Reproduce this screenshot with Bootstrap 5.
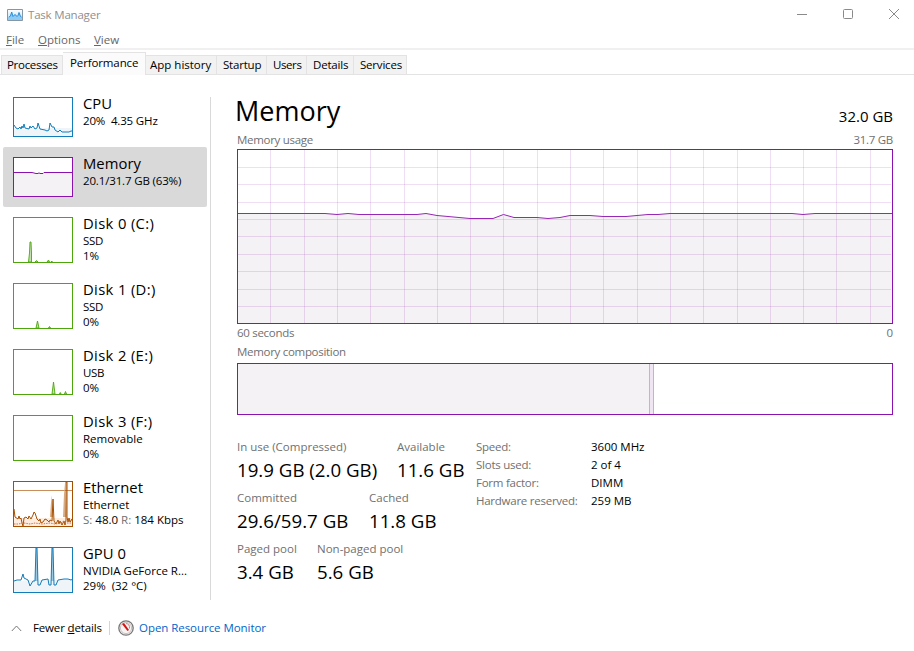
<!DOCTYPE html>
<html lang="en">
<head>
<meta charset="utf-8">
<title>Task Manager</title>
<link href="https://cdn.jsdelivr.net/npm/bootstrap@5.3.0/dist/css/bootstrap.min.css" rel="stylesheet">
<style>
body{font-family:"Open Sans","Noto Sans",sans-serif;font-size:11.5px;line-height:16px;color:#000;background:#fff;width:914px;height:651px;overflow:hidden}
svg{display:block;flex:none}
.titlebar{height:30px;color:#8f8f8f;padding-left:7px}
.titlebar .caption{letter-spacing:-.2px;padding-left:5px}
.winbtns{margin-right:-3px;margin-top:-2px}
.winbtn{width:46px;height:28px;color:#8a8a8a}
.menubar{height:20px;color:#666;padding:2px 0 0 6px;border-bottom:2px solid #f0f0f0}
.menubar .m1{width:32px}.menubar .m2{width:56px}
.tabstrip{height:25px;padding:2px 0 0 1px;box-shadow:inset 0 -1px #e3e3e3}
.tabstrip .tb{height:20px;background:#f2f2f2;border:1px solid #e3e3e3;border-left:0;white-space:nowrap;line-height:18px;padding-left:6px}
.tabstrip .tb.sel{height:23px;background:#fbfbfb;border-bottom:0;line-height:20px;padding-left:7px;letter-spacing:-.12px}
.w62{width:62px;border-left:1px solid #e3e3e3!important;padding-left:5px!important;letter-spacing:-.3px}.w83{width:83px}.w71{width:71px;padding-left:4px!important}.w50{width:50px;letter-spacing:-.2px}.w40{width:40px;letter-spacing:-.4px}.w47{width:47px;letter-spacing:-.2px}.w53{width:53px;letter-spacing:-.2px}
.workarea{height:526px}
.side{flex:none;width:210px;padding:12px 3px 0 3px}
.res{height:66px;padding:10px 0 0 10px;line-height:15px;white-space:nowrap}
.res.short{height:60px}
.res.sel{background:#d9d9d9;border-radius:2px}
.res .info{padding-left:10px;margin-top:-3px}
.res .nm{font-size:14.8px;line-height:18px;height:19px;letter-spacing:.05px}
.res .nm.wide{letter-spacing:.35px}
.res .tight,.tight{letter-spacing:-.15px}
.rule{flex:none;width:1px;height:503px;background:#d9d9d9;margin-top:22px}
.pane{flex:none;width:677px;margin-left:26px;padding-top:17px;padding-right:21px}
.lbl{color:#707070}
.headline{height:40px}
.headline h1{font-size:27px;line-height:38px;font-weight:400;margin:0 0 0 -2px}
.total{font-size:15px;line-height:20px;padding-top:14px}
.plot{height:175px}
.caps{height:17px;line-height:16px}
.tighter{letter-spacing:-.3px}
.axis{height:18px;padding-top:1px}
.comp{height:21px;padding-top:2px}
.figs{padding-top:24px}
.fig{height:51px;line-height:16px;white-space:nowrap}
.fig .v{font-size:18.7px;line-height:26px;padding-top:2px}
.left{width:239px}
.c1{width:160px}.c2{width:132px}.c3{width:80px}
.spec{line-height:18px;margin-top:-1px}
.spec .k{width:115px;letter-spacing:-.25px}
.foot{height:54px;padding-left:11px}
.foot .few{width:76px;padding-left:11px;letter-spacing:-.15px;width:87px}
.foot .sepr{width:1px;height:14px;background:#d5d5d5}
.link{color:#0066cc;padding-left:5px;letter-spacing:-.05px}
</style>
<script src="https://cdn.jsdelivr.net/npm/bootstrap@5.3.0/dist/js/bootstrap.bundle.min.js"></script>
</head>
<body>
<header class="titlebar d-flex align-items-center">
<svg width="16" height="12" viewBox="0 0 16 12"><defs><linearGradient id="ig" x2="0" y2="1"><stop stop-color="#fff"/><stop offset="1" stop-color="#b9dcf5"/></linearGradient></defs><path d="M.5.5h15v11H.5z" fill="url(#ig)" stroke="#8596a5"/><path d="M1 10V8l2-1 1.500-4L6 7l1-1 1-1 2 2 1-1 1-3 1.500 4L15 8v3H1z" fill="#8dcbf5"/><path d="M2 8l1.500-1 1.200-4L6 7.500l2-2 2 2 1-1 1-3 1.500 4L14.500 8" fill="none" stroke="#2b8fd8"/></svg>
<span class="caption">Task Manager</span>
<div class="winbtns d-flex ms-auto">
<span class="winbtn d-flex align-items-center justify-content-center"><svg width="10" height="1"><path d="M0 .5h10" stroke="currentColor"/></svg></span>
<span class="winbtn d-flex align-items-center justify-content-center"><svg width="10" height="10"><rect x=".5" y=".5" width="9" height="9" rx="1" fill="none" stroke="currentColor"/></svg></span>
<span class="winbtn d-flex align-items-center justify-content-center"><svg width="10" height="10"><path d="M0 0l10 10M10 0L0 10" fill="none" stroke="currentColor"/></svg></span>
</div>
</header>
<nav class="menubar d-flex align-items-center"><span class="m1"><u>F</u>ile</span><span class="m2"><u>O</u>ptions</span><span><u>V</u>iew</span></nav>
<div class="tabstrip d-flex align-items-end">
<div class="tb w62">Processes</div><div class="tb sel w83">Performance</div><div class="tb w71">App history</div><div class="tb w50">Startup</div><div class="tb w40">Users</div><div class="tb w47">Details</div><div class="tb w53">Services</div>
</div>
<main class="workarea d-flex">
<aside class="side">
<div class="res short d-flex"><svg width="60" height="40"><path d="M1 31h58v8H1z" fill="#eff4f9"/><path d="M1 28l2 3 2 1 2-2 1 2 1-3 1 2 1-4 1 4 4 1 1-3 1 2 2-2 2 3 2-1 1-5 2 6 5 1 2 1 2-1 1-7 2 4 2 0 1 3 3 2 2-2 2 2 3 0h4l2-1 3 0 1-2" fill="none" stroke="#117dbb"/><rect x=".5" y=".5" width="59" height="39" fill="none" stroke="#117dbb"/></svg><div class="info"><div class="nm">CPU</div><div class="tight">20%&nbsp; 4.35 GHz</div></div></div>
<div class="res short sel d-flex"><svg width="60" height="40"><path d="M0 0h60v40H0z" fill="#fff"/><path d="M1 16h58v23H1z" fill="#f4f2f4"/><path d="M1 15.500h18l4 1h2l1-.7 1 .7h3l1-1h28" fill="none" stroke="#8b12ae"/><rect x=".5" y=".5" width="59" height="39" fill="none" stroke="#8b12ae"/></svg><div class="info"><div class="nm">Memory</div><div class="tight">20.1/31.7 GB (63%)</div></div></div>
<div class="res d-flex"><svg width="60" height="46"><g fill="#c3e0b0" stroke="#4da60c"><path d="M15.500 45l1-9 .5-11h1l.5 11v9zM22 45l1.500-1.500L25 45zM34 45l1.500-2 1 2zM38 45l.7-1 .7 1z" stroke-width=".9"/><rect x=".5" y=".5" width="59" height="45" fill="none"/></g></svg><div class="info"><div class="nm wide">Disk 0 (C:)</div><div class="tighter">SSD</div><div>1%</div></div></div>
<div class="res d-flex"><svg width="60" height="46"><g fill="#c3e0b0" stroke="#4da60c"><path d="M23 45l1.500-7 1.500 7zM35.500 45l1-1.500 1 1.500z" stroke-width=".9"/><rect x=".5" y=".5" width="59" height="45" fill="none"/></g></svg><div class="info"><div class="nm wide">Disk 1 (D:)</div><div class="tighter">SSD</div><div>0%</div></div></div>
<div class="res d-flex"><svg width="60" height="46"><g fill="#c3e0b0" stroke="#4da60c"><path d="M39 45l1.500-12 1.500 12zM46.500 45l.8-1.500.8 1.500zM51.500 45l1-2.500 1 2.500z" stroke-width=".9"/><rect x=".5" y=".5" width="59" height="45" fill="none"/></g></svg><div class="info"><div class="nm wide">Disk 2 (E:)</div><div class="tighter">USB</div><div>0%</div></div></div>
<div class="res d-flex"><svg width="60" height="46"><rect x=".5" y=".5" width="59" height="45" fill="none" stroke="#4da60c"/></svg><div class="info"><div class="nm wide">Disk 3 (F:)</div><div>Removable</div><div>0%</div></div></div>
<div class="res d-flex"><svg width="60" height="46"><path d="M1 9.500h58" stroke="#c88f5d"/><path d="M1 37h58v8H1z" fill="#fdece0"/><path d="M37 36l1.500-22L40 36zM50 36l1.500-34L53 36z" fill="#d9ab82"/><path d="M1 28l1 8 3 2 1-3 1 3 1-1 1 5 1 3 1-8 2-1 2 2 1-3 2 3 2-4 1-3 1 1 2 6 2 2 1-2 1 4 2-1 2-3 2 1 2 2 1-2 2 1 1-22 1 22 2 3 2-4 1 4 1-3 2 4 2-4 1 4 1-5V1h1v35l1 5 1-4 1 4 2-3 1 4" fill="none" stroke="#a74f01"/><path d="M1 43l4 0 6-1 6 1 5-1 7 1 8-1 5 1 6-1 2-2 3 2 5 0" fill="none" stroke="#d9744c" stroke-dasharray="1.500 1"/><rect x=".5" y=".5" width="59" height="45" fill="none" stroke="#a74f01"/></svg><div class="info"><div class="nm">Ethernet</div><div>Ethernet</div><div><span class="lbl">S:</span>&nbsp;48.0 <span class="lbl">R:</span>&nbsp;184 Kbps</div></div></div>
<div class="res d-flex"><svg width="60" height="46"><path d="M1 34l20-1h20l18-1V45H1z" fill="#eff4f9"/><path d="M22 34L23 1h1l1 33zM38 34L39 1h1l1 33z" fill="#9dc8e2"/><path d="M1 34l3-1h4l2-6 1 4 2 1 2 1 2 6 3-5h2L23 1h1l1 37h2l2-5 6-1 1 6h2l1-37h1l1 37h2l2-5 6-1h4l3 1 2-1" fill="none" stroke="#117dbb"/><rect x=".5" y=".5" width="59" height="45" fill="none" stroke="#117dbb"/></svg><div class="info"><div class="nm">GPU 0</div><div>NVIDIA GeForce R...</div><div>29%&nbsp; (32 °C)</div></div></div>
</aside>
<div class="rule"></div>
<section class="pane">
<div class="headline d-flex justify-content-between align-items-start"><h1>Memory</h1><span class="total">32.0 GB</span></div>
<div class="lbl d-flex justify-content-between caps"><span class="tighter">Memory usage</span><span class="tighter">31.7 GB</span></div>
<svg class="plot" width="656" height="175"><path d="M0 64.500H88l12 1 11-1 11 1h58l9-1 11 2 33 3h23l10.500-4L277 68.500h23l11 1 12-1 10-2h20l13 1h23l22-2h10l12-1h122l11 1 12-1h78V175H0z" fill="#f4f2f4"/><path d="M33.500 1v173M67.500 1v173M100.500 1v173M133.500 1v173M167.500 1v173M200.500 1v173M233.500 1v173M266.500 1v173M300.500 1v173M333.500 1v173M366.500 1v173M400.500 1v173M433.500 1v173M466.500 1v173M500.500 1v173M533.500 1v173M566.500 1v173M599.500 1v173M633.500 1v173M1 18.500h653M1 35.500h653M1 53.500h653M1 70.500h653M1 87.500h653M1 105.500h653M1 122.500h653M1 140.500h653M1 157.500h653" stroke="#8b12ae" stroke-opacity=".14"/><path d="M0 64.500H88l12 1 11-1 11 1h58l9-1 11 2 33 3h23l10.500-4L277 68.500h23l11 1 12-1 10-2h20l13 1h23l22-2h10l12-1h122l11 1 12-1h78" fill="none" stroke="#9528b4"/><rect x=".5" y=".5" width="655" height="174" fill="none" stroke="#8b12ae"/></svg>
<div class="lbl d-flex justify-content-between axis"><span class="tighter">60 seconds</span><span>0</span></div>
<div class="lbl comp tighter">Memory composition</div>
<svg width="656" height="52"><path d="M1 1h412v50H1z" fill="#f4f2f4"/><path d="M413 1h3v50h-3z" fill="#f0e6f3"/><path d="M412.500 1v50M416.500 1v50" stroke="#c9b0d2"/><rect x=".5" y=".5" width="655" height="51" fill="none" stroke="#8b12ae"/></svg>
<div class="figs d-flex">
<div class="left">
<div class="d-flex fig"><div class="c1"><div class="lbl">In use (Compressed)</div><div class="v">19.9 GB (2.0 GB)</div></div><div><div class="lbl">Available</div><div class="v">11.6 GB</div></div></div>
<div class="d-flex fig"><div class="c2"><div class="lbl">Committed</div><div class="v">29.6/59.7 GB</div></div><div><div class="lbl">Cached</div><div class="v">11.8 GB</div></div></div>
<div class="d-flex fig"><div class="c3"><div class="lbl">Paged pool</div><div class="v">3.4 GB</div></div><div><div class="lbl">Non-paged pool</div><div class="v">5.6 GB</div></div></div>
</div>
<div class="spec">
<div class="d-flex"><span class="k lbl">Speed:</span><span>3600 MHz</span></div>
<div class="d-flex"><span class="k lbl">Slots used:</span><span>2 of 4</span></div>
<div class="d-flex"><span class="k lbl">Form factor:</span><span>DIMM</span></div>
<div class="d-flex"><span class="k lbl">Hardware reserved:</span><span>259 MB</span></div>
</div>
</div>
</section>
</main>
<footer class="foot d-flex align-items-center">
<svg width="11" height="7"><path d="M.8 6L5.500 1l4.700 5" fill="none" stroke="#777"/></svg>
<span class="few">Fewer <u>d</u>etails</span>
<span class="sepr"></span>
<svg class="ms-2" width="16" height="16"><circle cx="8" cy="8" r="7.200" fill="#f7f4f3" stroke="#777" stroke-width="1.300"/><circle cx="8" cy="8" r="5.600" fill="none" stroke="#c9c4c2"/><path d="M4 4L9.500 11l1.500-1L6 3z" fill="#d31313"/><path d="M8 3.500q4 .5 3.500 5" fill="none" stroke="#c88"/></svg>
<span class="link">Open Resource Monitor</span>
</footer>
</body>
</html>
